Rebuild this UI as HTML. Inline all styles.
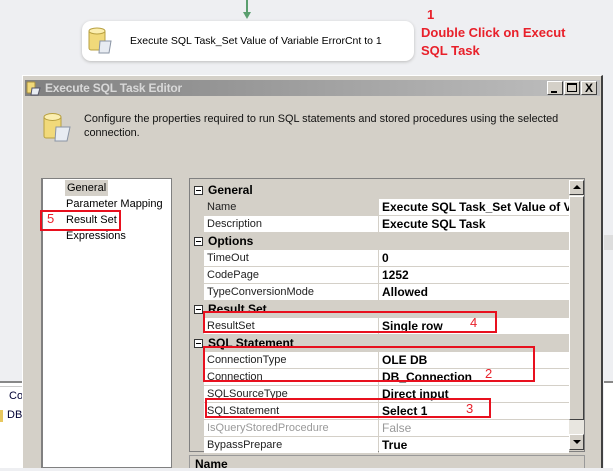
<!DOCTYPE html>
<html><head><style>
*{margin:0;padding:0;box-sizing:border-box}
body{width:613px;height:468px;overflow:hidden;background:#eeeff2;font-family:"Liberation Sans",sans-serif;font-size:11px;color:#000;position:relative}
.a{position:absolute}
.red{color:#e8202a;font-weight:bold}
.box{position:absolute;border:2px solid #e8101e}
.row{position:absolute;left:190px;width:379px;height:17px}
.hd{background:#d4d0c8;font-weight:bold;font-size:12px}
.pm{position:absolute;left:4px;top:4px;width:9px;height:9px;border:1px solid #333;background:#fff}
.pm:after{content:"";position:absolute;left:1px;top:3px;width:5px;height:1px;background:#000}
.n{position:absolute;left:14px;top:0;width:174px;height:16px;background:#fff;padding:2px 0 0 3px;color:#222}
.v{position:absolute;left:189px;top:0;width:190px;height:16px;background:#fff;padding:1px 0 0 3px;font-weight:bold;font-size:12px;white-space:nowrap;overflow:hidden}
.ht{position:absolute;left:18px;top:1px}
.li{position:absolute;left:66px;font-size:11px;line-height:16px}
</style></head><body>
<div class="a" style="left:0;top:381px;width:22px;height:87px;background:#fff;border-top:2px solid #888"></div>
<div class="a" style="left:0;top:386px;width:22px;height:1px;background:#ccc"></div>
<div class="a" style="left:9px;top:390px;font-size:11px;color:#003">Co</div>
<div class="a" style="left:0;top:410px;width:3px;height:12px;background:#e8c860"></div>
<div class="a" style="left:7px;top:409px;font-size:11px;color:#003">DB</div>
<div class="a" style="left:604px;top:381px;width:9px;height:87px;background:#fff;border-top:2px solid #888"></div>
<div class="a" style="left:604px;top:235px;width:9px;height:15px;background:#ddd"></div>

<div class="a" style="left:246px;top:0;width:2px;height:14px;background:#5a9e6e"></div>
<div class="a" style="left:243px;top:12px;width:0;height:0;border-left:4px solid transparent;border-right:4px solid transparent;border-top:7px solid #5a9e6e"></div>
<div class="a" style="left:82px;top:21px;width:332px;height:40px;background:#fff;border-radius:9px;box-shadow:0 1px 3px #bbb"></div>
<svg class="a" style="left:88px;top:27px" width="32" height="30"><rect x="1" y="3" width="16" height="20" rx="2" fill="#f1d97a" stroke="#b8a040"/><ellipse cx="9" cy="4" rx="8" ry="3" fill="#fbeeb0" stroke="#b8a040"/><path d="M12 14h11l-2 12h-10z" fill="#e8ecf2" stroke="#8a94a4"/></svg>
<div class="a" style="left:130px;top:35px;font-size:10.5px">Execute SQL Task_Set Value of Variable ErrorCnt to 1</div>
<div class="a red" style="left:427px;top:7px;font-size:13px">1</div>
<div class="a red" style="left:421px;top:25px;font-size:13px">Double Click on Execut</div>
<div class="a red" style="left:421px;top:43px;font-size:13px">SQL Task</div>

<div class="a" style="left:22px;top:75px;width:581px;height:393px;background:#d4d0c8;border-left:1px solid #fff;border-top:1px solid #fff;border-right:2px solid #404040"></div>
<div class="a" style="left:25px;top:80px;width:575px;height:16px;background:linear-gradient(to right,#808080,#c0c0c0)"></div>
<svg class="a" style="left:26px;top:80px" width="16" height="16"><rect x="1" y="2" width="8" height="11" rx="1" fill="#f1d97a" stroke="#a89040"/><path d="M6 8h8l-2 7h-7z" fill="#e8ecf2" stroke="#556"/></svg>
<div class="a" style="left:45px;top:81px;color:#d8d8d8;font-weight:bold;font-size:12px;letter-spacing:-0.2px">Execute SQL Task Editor</div>
<div class="a" style="left:547px;top:81px;width:16px;height:14px;background:#d4d0c8;border:1px solid;border-color:#fff #404040 #404040 #fff"><div class="a" style="left:3px;top:9px;width:6px;height:2px;background:#000"></div></div>
<div class="a" style="left:564px;top:81px;width:16px;height:14px;background:#d4d0c8;border:1px solid;border-color:#fff #404040 #404040 #fff"><div class="a" style="left:2px;top:1px;width:10px;height:9px;border:1px solid #000;border-top-width:2px"></div></div>
<div class="a" style="left:581px;top:81px;width:16px;height:14px;background:#d4d0c8;border:1px solid;border-color:#fff #404040 #404040 #fff;font-weight:bold;font-size:12px;text-align:center;line-height:12px">X</div>

<svg class="a" style="left:43px;top:112px" width="32" height="32"><rect x="1" y="4" width="17" height="22" rx="2" fill="#f1d97a" stroke="#b8a040"/><ellipse cx="9.5" cy="5" rx="8.5" ry="3.5" fill="#fbeeb0" stroke="#b8a040"/><path d="M13 15h14l-3 14h-12z" fill="#e8ecf2" stroke="#8a94a4"/></svg>
<div class="a" style="left:84px;top:112px;color:#111;line-height:14px;font-size:10.9px">Configure the properties required to run SQL statements and stored procedures using the selected<br>connection.</div>

<div class="a" style="left:41px;top:178px;width:131px;height:290px;background:#fff;border:1px solid #808080;border-left:2px solid #808080"></div>
<div class="a" style="left:65px;top:180px;background:#d4d0c8;padding:0 2px;font-size:11px;line-height:16px">General</div>
<div class="li" style="top:196px">Parameter Mapping</div>
<div class="li" style="top:212px">Result Set</div>
<div class="li" style="top:228px">Expressions</div>
<div class="box" style="left:40px;top:210px;width:81px;height:21px"></div>
<div class="a red" style="left:47px;top:211px;font-size:13px;font-weight:normal">5</div>

<div class="a" style="left:189px;top:178px;width:396px;height:274px;background:#d4d0c8;border:1px solid #808080"></div>
<div class="row hd" style="top:182px"><div class="pm"></div><span class="ht">General</span></div>
<div class="row" style="top:199px"><div class="n" style="background:#d4d0c8">Name</div><div class="v">Execute SQL Task_Set Value of Variable</div></div>
<div class="row" style="top:216px"><div class="n">Description</div><div class="v">Execute SQL Task</div></div>
<div class="row hd" style="top:233px"><div class="pm"></div><span class="ht">Options</span></div>
<div class="row" style="top:250px"><div class="n">TimeOut</div><div class="v">0</div></div>
<div class="row" style="top:267px"><div class="n">CodePage</div><div class="v">1252</div></div>
<div class="row" style="top:284px"><div class="n">TypeConversionMode</div><div class="v">Allowed</div></div>
<div class="row hd" style="top:301px"><div class="pm"></div><span class="ht">Result Set</span></div>
<div class="row" style="top:318px"><div class="n">ResultSet</div><div class="v">Single row</div></div>
<div class="row hd" style="top:335px"><div class="pm"></div><span class="ht">SQL Statement</span></div>
<div class="row" style="top:352px"><div class="n">ConnectionType</div><div class="v">OLE DB</div></div>
<div class="row" style="top:369px"><div class="n">Connection</div><div class="v">DB_Connection</div></div>
<div class="row" style="top:386px"><div class="n">SQLSourceType</div><div class="v">Direct input</div></div>
<div class="row" style="top:403px"><div class="n">SQLStatement</div><div class="v">Select 1</div></div>
<div class="row" style="top:420px"><div class="n" style="color:#999">IsQueryStoredProcedure</div><div class="v" style="color:#999;font-weight:normal">False</div></div>
<div class="row" style="top:437px"><div class="n">BypassPrepare</div><div class="v">True</div></div>
<div class="a" style="left:569px;top:180px;width:15px;height:270px;background:#e8e6e0"></div>
<div class="a" style="left:569px;top:180px;width:15px;height:15px;background:#d4d0c8;border:1px solid;border-color:#fff #404040 #404040 #fff"><div class="a" style="left:3px;top:4px;border-left:4px solid transparent;border-right:4px solid transparent;border-bottom:4px solid #000"></div></div>
<div class="a" style="left:569px;top:196px;width:15px;height:224px;background:#d4d0c8;border:1px solid;border-color:#fff #404040 #404040 #fff"></div>
<div class="a" style="left:569px;top:434px;width:15px;height:16px;background:#d4d0c8;border:1px solid;border-color:#fff #404040 #404040 #fff"><div class="a" style="left:3px;top:5px;border-left:4px solid transparent;border-right:4px solid transparent;border-top:4px solid #000"></div></div>
<div class="a" style="left:189px;top:455px;width:396px;height:13px;border:1px solid #999;border-bottom:none"></div>
<div class="a" style="left:195px;top:457px;font-weight:bold;font-size:12px">Name</div>

<div class="box" style="left:203px;top:311px;width:294px;height:22px"></div>
<div class="a red" style="left:470px;top:315px;font-size:13px;font-weight:normal">4</div>
<div class="box" style="left:203px;top:346px;width:332px;height:36px"></div>
<div class="a red" style="left:485px;top:366px;font-size:13px;font-weight:normal">2</div>
<div class="box" style="left:205px;top:398px;width:286px;height:20px"></div>
<div class="a red" style="left:466px;top:401px;font-size:13px;font-weight:normal">3</div>
</body></html>
